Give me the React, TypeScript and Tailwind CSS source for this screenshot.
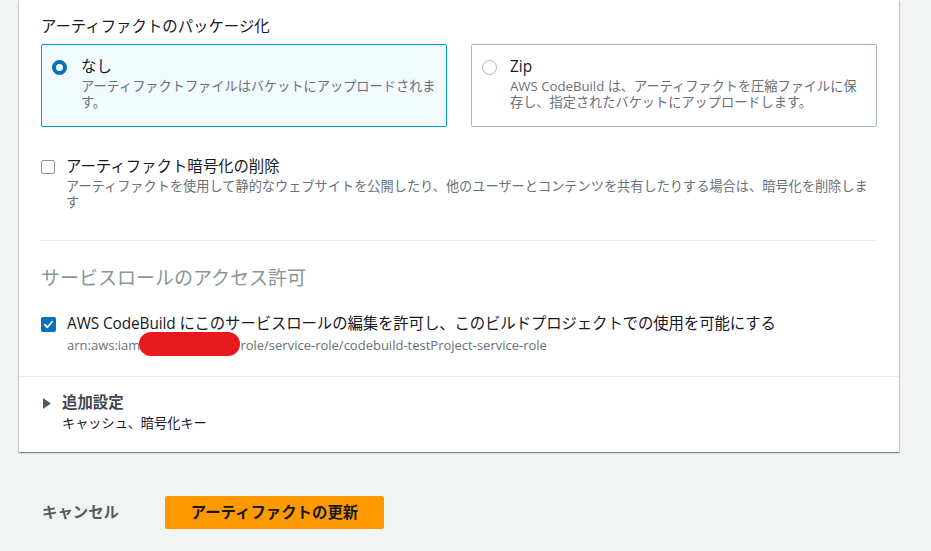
import React from "react"

const font = { fontFamily: '"Open Sans", "Noto Sans CJK JP", sans-serif' }

function Radio({ checked }: { checked: boolean }) {
  return checked ? (
    <span className="mt-[4px] block h-[15px] w-[15px] shrink-0 rounded-full border-[4px] border-[#0073bb] bg-white" />
  ) : (
    <span className="mt-[4px] block h-[15px] w-[15px] shrink-0 rounded-full border border-[#aab7b8] bg-white" />
  )
}

function Checkbox({ checked }: { checked: boolean }) {
  if (!checked) {
    return <span className="mt-[4px] block h-[14px] w-[14px] shrink-0 rounded-[2px] border border-[#879596] bg-white" />
  }
  return (
    <span className="mt-[4px] flex h-[15px] w-[15px] shrink-0 items-center justify-center rounded-[2px] bg-[#0073bb]">
      <svg width="11" height="11" viewBox="0 0 12 12" fill="none">
        <path d="M2 6.3 4.8 9 10 3" stroke="white" strokeWidth="2" strokeLinecap="round" strokeLinejoin="round" />
      </svg>
    </span>
  )
}

function Tile({ checked, title, lines }: { checked: boolean; title: string; lines: string[] }) {
  return (
    <div
      className={
        checked
          ? "flex h-[83px] gap-[14px] rounded-[2px] border border-[#00a1c9] bg-[#f1faff] pl-[10px] pt-[11px]"
          : "flex h-[83px] gap-[13px] rounded-[2px] border border-[#aab7b8] bg-white pl-[10px] pt-[11px]"
      }
    >
      <Radio checked={checked} />
      <div>
        <div className="text-[15.4px] leading-[22px] text-[#16191f]">{title}</div>
        {lines.map((l) => (
          <div key={l} className="whitespace-nowrap text-[13.2px] leading-[16px] text-[#687078]">
            {l}
          </div>
        ))}
      </div>
    </div>
  )
}

export default function App() {
  return (
    <div className="h-[551px] w-full overflow-hidden bg-[#f2f3f3]" style={font}>
      <div className="ml-[19px] w-[880px] bg-white shadow-[0_1px_1px_0_rgba(0,28,36,0.3),1px_1px_1px_0_rgba(0,28,36,0.15),-1px_1px_1px_0_rgba(0,28,36,0.15)]">
        <div className="px-[22px] pb-[21px] pt-[16px]">
          <div className="text-[15.4px] leading-[22px] text-[#16191f]">アーティファクトのパッケージ化</div>
          <div className="mt-[6px] grid grid-cols-2 gap-[24px]">
            <Tile checked title="なし" lines={["アーティファクトファイルはバケットにアップロードされま", "す。"]} />
            <Tile
              checked={false}
              title="Zip"
              lines={["AWS CodeBuild は、アーティファクトを圧縮ファイルに保", "存し、指定されたバケットにアップロードします。"]}
            />
          </div>

          <div className="mt-[29px] flex gap-[11px]">
            <Checkbox checked={false} />
            <div>
              <div className="text-[15.4px] leading-[22px] text-[#16191f]">アーティファクト暗号化の削除</div>
              <div className="whitespace-nowrap text-[13.2px] leading-[16px] text-[#687078]">
                アーティファクトを使用して静的なウェブサイトを公開したり、他のユーザーとコンテンツを共有したりする場合は、暗号化を削除しま
              </div>
              <div className="text-[13.2px] leading-[16px] text-[#687078]">す</div>
            </div>
          </div>

          <div className="mt-[30px] h-px bg-[#eaeded]" />

          <div className="mt-[25px] text-[19px] leading-[24px] text-[#879596]">サービスロールのアクセス許可</div>

          <div className="mt-[23px] flex gap-[11px]">
            <Checkbox checked />
            <div>
              <div className="text-[15.4px] leading-[22px] tracking-[-0.1px] text-[#16191f]">
                AWS CodeBuild にこのサービスロールの編集を許可し、このビルドプロジェクトでの使用を可能にする
              </div>
              <div className="whitespace-nowrap text-[13px] leading-[20px] text-[#687078]">
                arn:aws:iam
                <span className="relative inline-block h-[20px] w-[100px] align-top">
                  <span className="absolute left-[-1px] top-[-3px] h-[24px] w-[101px] rounded-full bg-[#e8191c]" />
                </span>
                role/service-role/codebuild-testProject-service-role
              </div>
            </div>
          </div>
        </div>

        <div className="border-t border-[#eaeded] px-[22px] pb-[20px] pt-[15px]">
          <div className="flex items-center gap-[11px] pl-[2px]">
            <svg width="8" height="11" viewBox="0 0 8 11">
              <path d="M0 0 8 5.5 0 11Z" fill="#545b64" />
            </svg>
            <span className="text-[15.4px] font-bold leading-[22px] text-[#414750]">追加設定</span>
          </div>
          <div className="pl-[21px] text-[13.2px] leading-[18px] text-[#16191f]">キャッシュ、暗号化キー</div>
        </div>
      </div>

      <div className="mt-[44px] flex items-center pl-[42px]">
        <span className="text-[15.4px] font-bold leading-[22px] text-[#545b64]">キャンセル</span>
        <button
          type="button"
          className="ml-[46px] flex h-[33px] w-[219px] items-center justify-center rounded-[2px] bg-[#ff9900] text-[15.4px] font-bold text-[#16191f]"
        >
          アーティファクトの更新
        </button>
      </div>
    </div>
  )
}
